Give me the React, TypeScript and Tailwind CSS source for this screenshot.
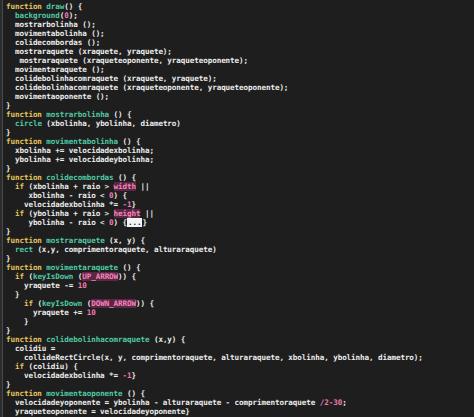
type Tok = [string, string?];

// k = keyword, f = function name, n = number, c = constant, x = folded block
const lines: Tok[][] = [
  [["function", "k"], [" "], ["draw", "f"], ["() {"]],
  [["  "], ["background", "f"], ["("], ["0", "n"], [");"]],
  [["  mostrarbolinha ();"]],
  [["  movimentabolinha ();"]],
  [["  colidecombordas ();"]],
  [["  mostraraquete (xraquete, yraquete);"]],
  [["   mostraraquete (xraqueteoponente, yraqueteoponente);"]],
  [["  movimentaraquete ();"]],
  [["  colidebolinhacomraquete (xraquete, yraquete);"]],
  [["  colidebolinhacomraquete (xraqueteoponente, yraqueteoponente);"]],
  [["  movimentaoponente ();"]],
  [["}"]],
  [["function", "k"], [" "], ["mostrarbolinha", "f"], [" () {"]],
  [["  "], ["circle", "f"], [" (xbolinha, ybolinha, diametro)"]],
  [["}"]],
  [["function", "k"], [" "], ["movimentabolinha", "f"], [" () {"]],
  [["  xbolinha += velocidadexbolinha;"]],
  [["  ybolinha += velocidadeybolinha;"]],
  [["}"]],
  [["function", "k"], [" "], ["colidecombordas", "f"], [" () {"]],
  [["  "], ["if", "k"], [" (xbolinha + raio > "], ["width", "c"], [" ||"]],
  [["     xbolinha - raio < "], ["0", "n"], [") {"]],
  [["    velocidadexbolinha *= "], ["-1", "n"], ["}"]],
  [["  "], ["if", "k"], [" (ybolinha + raio > "], ["height", "c"], [" ||"]],
  [["     ybolinha - raio < "], ["0", "n"], [") {"], ["...", "x"], ["}"]],
  [["}"]],
  [["function", "k"], [" "], ["mostraraquete", "f"], [" (x, y) {"]],
  [["  "], ["rect", "f"], [" (x,y, comprimentoraquete, alturaraquete)"]],
  [["}"]],
  [["function", "k"], [" "], ["movimentaraquete", "f"], [" () {"]],
  [["  "], ["if", "k"], [" ("], ["keyIsDown", "f"], [" ("], ["UP_ARROW", "c"], [")) {"]],
  [["    yraquete -= "], ["10", "n"]],
  [["  }"]],
  [["    "], ["if", "k"], [" ("], ["keyIsDown", "f"], [" ("], ["DOWN_ARROW", "c"], [")) {"]],
  [["      yraquete += "], ["10", "n"]],
  [["    }"]],
  [["}"]],
  [["function", "k"], [" "], ["colidebolinhacomraquete", "f"], [" (x,y) {"]],
  [["  colidiu ="]],
  [["    collideRectCircle(x, y, comprimentoraquete, alturaraquete, xbolinha, ybolinha, diametro);"]],
  [["  "], ["if", "k"], [" (colidiu) {"]],
  [["    velocidadexbolinha *= "], ["-1", "n"], ["}"]],
  [["}"]],
  [["function", "k"], [" "], ["movimentaoponente", "f"], [" () {"]],
  [["  velocidadeyoponente = ybolinha - alturaraquete - comprimentoraquete "], ["/2-30", "n"], [";"]],
  [["  yraqueteoponente = velocidadeyoponente}"]],
];

const tokClass: Record<string, string> = {
  k: "text-[#e3c55c]",
  f: "text-[#4fcaa4]",
  n: "text-[#f07aae]",
  c: "text-[#f584bd] bg-[#5a2742]",
  x: "text-[#1e1e1e] bg-[#f2f2f2] px-[1px]",
};

export default function App() {
  return (
    <div className="w-[474px] h-[417px] overflow-hidden bg-[#1e1e1e] flex">
      <div className="w-[3px] h-full bg-[#2c2c2c] border-r border-[#4a4a4a]" />
      <pre
        className="pl-[3px] pt-[1.5px] text-[7.6px] leading-[9px] tracking-[-0.09px] text-[#ececec] font-semibold"
        style={{fontFamily: '"DejaVu Sans Mono", "Liberation Mono", monospace'}}
      >
        {lines.map((line, i) => (
          <div key={i} className="h-[9px] whitespace-pre">
            {line.map(([text, kind], j) => (
              <span key={j} className={kind ? tokClass[kind] : undefined}>{text}</span>
            ))}
          </div>
        ))}
      </pre>
    </div>
  );
}
